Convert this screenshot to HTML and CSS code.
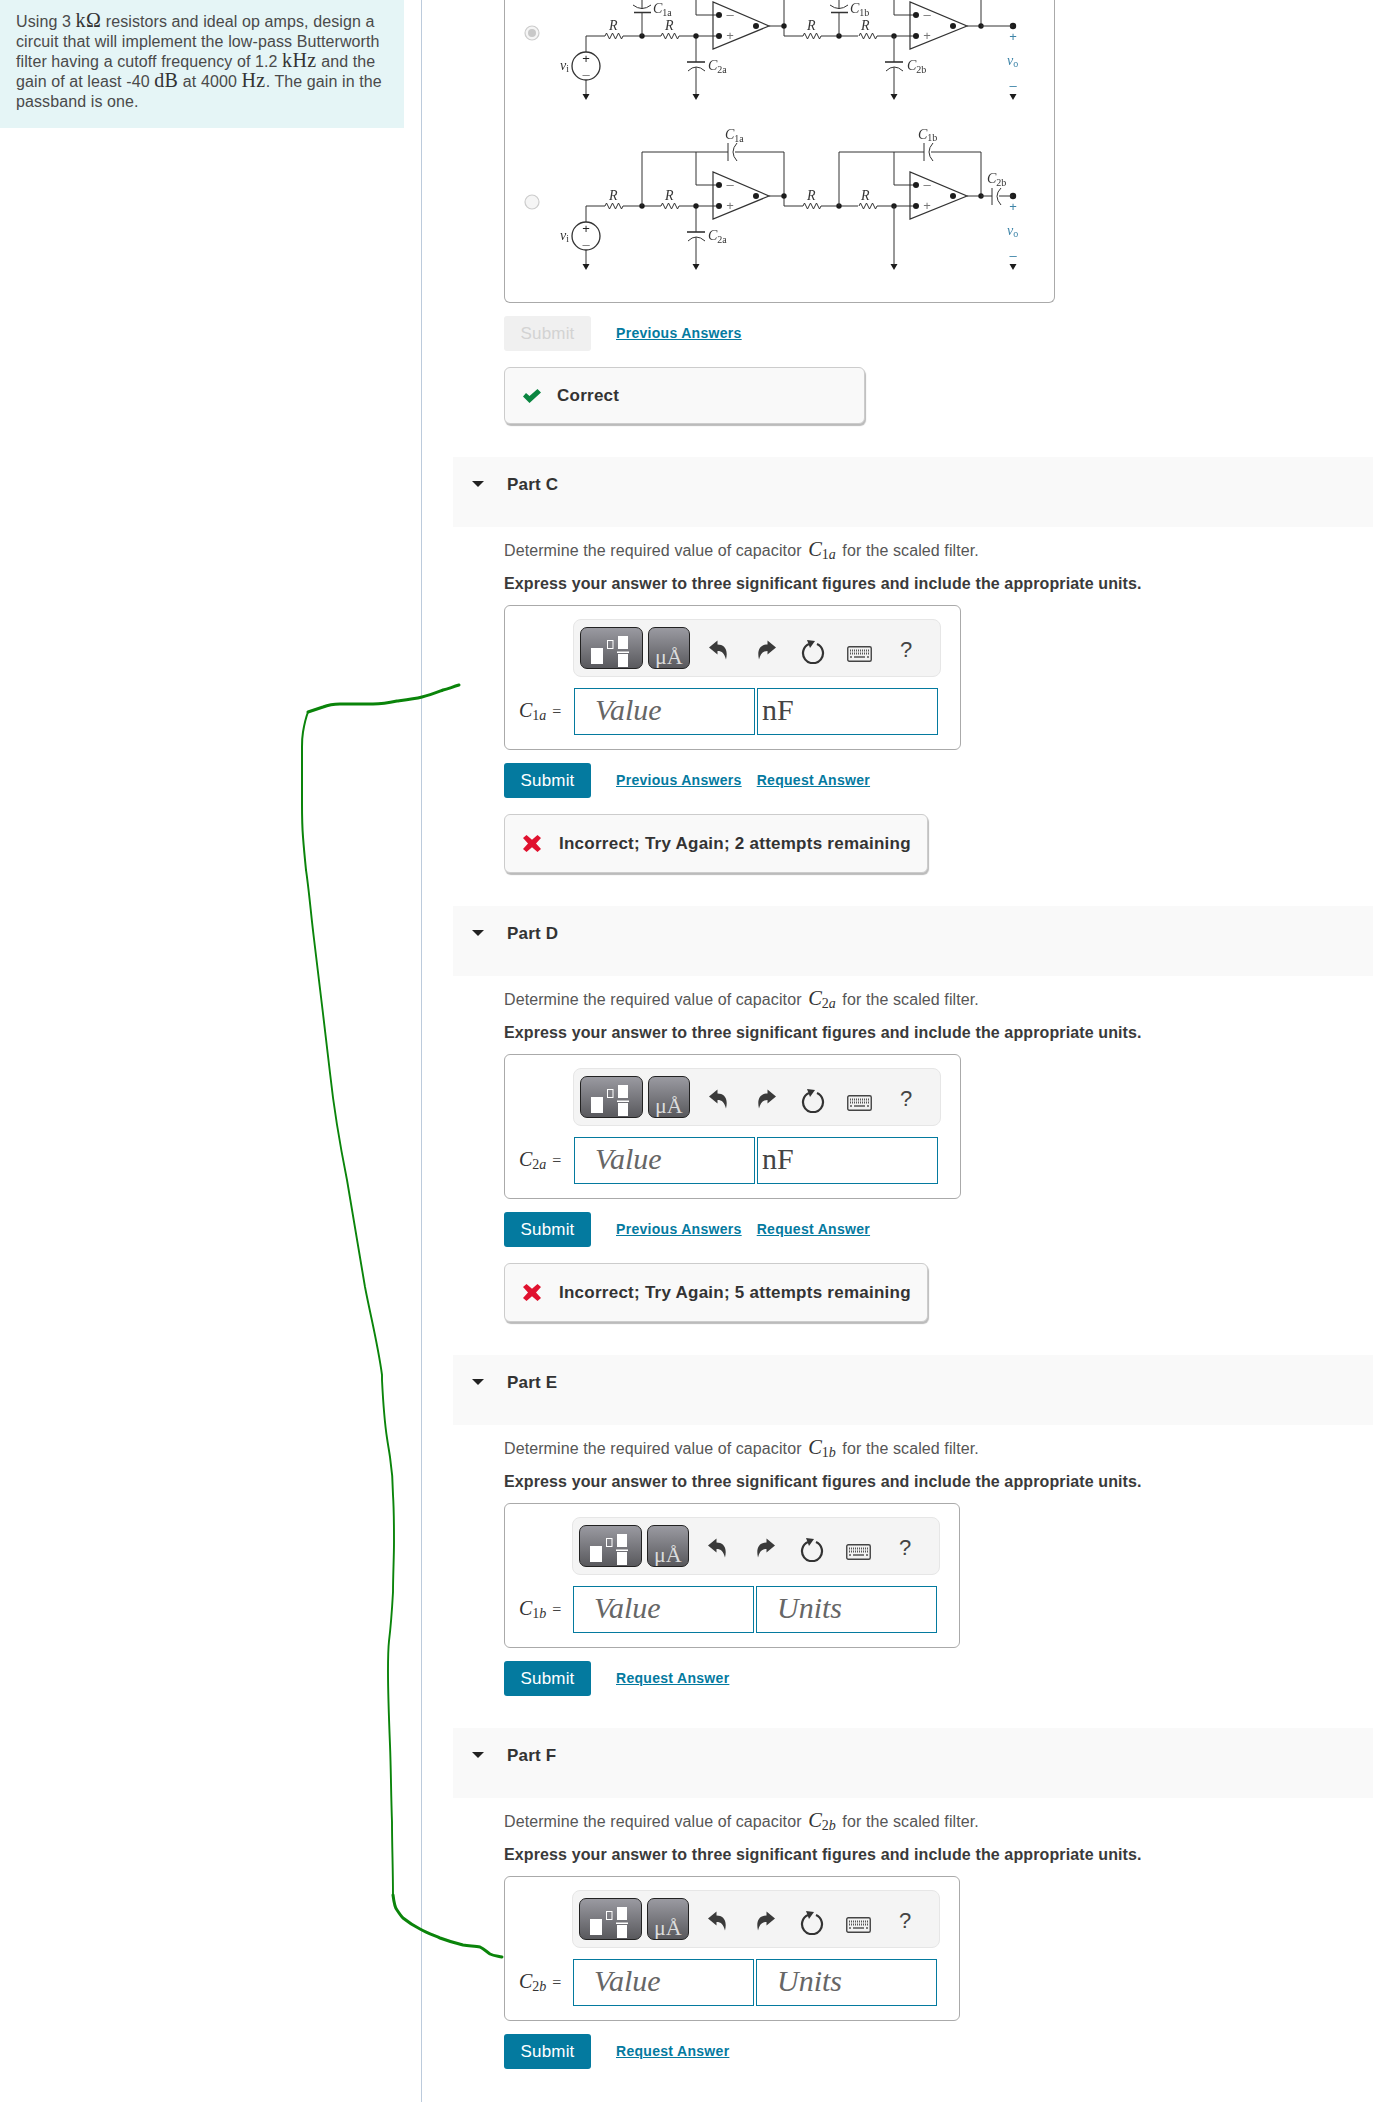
FILE: index.html
```html
<!DOCTYPE html>
<html>
  <head>
    <meta charset="utf-8" />
    <title>Part C - Part F</title>
    <link rel="stylesheet" href="styles.css">
  </head>
  <body>
    <svg class="defs" width="0" height="0">
      <symbol id="i-undo" viewBox="0 0 18 20">
        <path d="M0 7.500 L8.500 0.500 V4.500 C15 4.500 19.500 9 17 19.500 C15.500 13.500 13 11 8.500 11 V14.500 Z" />
      </symbol>
      <symbol id="i-reset" viewBox="0 0 24 26">
        <path class="ring" d="M16 6 A10 10 0 1 1 8 6" />
        <path d="M6 2 L14 3 L9 10 Z" />
      </symbol>
      <symbol id="i-keys" viewBox="0 0 25 16">
        <rect class="kb" x="0.75" y="0.75" width="23.5" height="14.5" rx="1.5" />
        <path class="kb-keys" d="M3 4.5 H22 M3 7.5 H22" />
        <path class="kb-bar" d="M3 11 H5 M7 11 H18 M20 11 H22" />
      </symbol>
      <symbol id="i-template" viewBox="0 0 63 42">
        <rect x="11" y="21" width="12" height="16" />
        <rect class="hollow" x="27.5" y="13.5" width="5.5" height="8" />
        <rect x="38" y="9" width="10" height="13" />
        <rect x="37" y="24.500" width="12" height="1.5" />
        <rect x="38" y="27" width="10" height="13" />
      </symbol>
      <symbol id="i-check" viewBox="0 0 18 14">
        <path d="M0 7.500 L3 4 L6.500 7 L14.500 0 L18 3.500 L6.500 14 Z" />
      </symbol>
      <symbol id="i-cross" viewBox="0 0 18 17">
        <path d="M0 3 L3.500 0 L9 4.800 L14.500 0 L18 3 L13 8.500 L18 14 L14.500 17 L9 12.200 L3.500 17 L0 14 L5 8.500 Z" />
      </symbol>
    </svg>

    <div class="page">
      <aside class="sidebar">
        <div class="problem">
          Using 3 <span class="math">kΩ</span> resistors and ideal op amps, design a circuit that will implement the low-pass Butterworth
          filter having a cutoff frequency of 1.2 <span class="math">kHz</span> and the gain of at least -40 <span class="math">dB</span> at 4000 <span class="math">Hz</span>. The gain in the
          passband is one.
        </div>
      </aside>

      <main class="main">
        <div class="first-part">
          <div class="choices">
            <svg class="circuit" viewBox="505 0 549 302" width="549" height="302">
              <defs>
                <g id="common">
                  <path d="M586 222V206H605M623 206H661M679 206H719M784 152V206H803M821 206H858M877 206H916M586 250V265M696 206V232M696 237V265M696 152V185H719M894 152V185H916M769 196H784M967 196H981M981 152V196" />
                  <path d="M605 206l1.500-3 3 6 3-6 3 6 3-6 3 6 1.500-3" />
                  <path d="M661 206l1.500-3 3 6 3-6 3 6 3-6 3 6 1.500-3" />
                  <path d="M803 206l1.500-3 3 6 3-6 3 6 3-6 3 6 1.500-3" />
                  <path d="M859 206l1.500-3 3 6 3-6 3 6 3-6 3 6 1.500-3" />
                  <circle class="source" cx="586" cy="236" r="14" />
                  <path class="amp" d="M713 172V219L769 196Z" />
                  <path class="amp" d="M910 172V219L967 196Z" />
                  <path class="plate" d="M687 232H705" />
                  <path d="M688 241Q696 233 705 241" />
                  <path class="fill" d="M582.500 264H589.500L586 270ZM692.500 264H699.500L696 270ZM890.500 264H897.500L894 270ZM1009.500 264H1016.500L1013 270Z" />
                  <g class="fill">
                    <circle cx="642" cy="206" r="2.700" />
                    <circle cx="696" cy="206" r="2.700" />
                    <circle cx="784" cy="196" r="2.700" />
                    <circle cx="839" cy="206" r="2.700" />
                    <circle cx="894" cy="206" r="2.700" />
                    <circle cx="981" cy="196" r="2.700" />
                    <circle cx="1013" cy="196" r="3.200" />
                    <circle cx="719" cy="185" r="3" />
                    <circle cx="719" cy="206" r="3" />
                    <circle cx="756" cy="196" r="3" />
                    <circle cx="916" cy="185" r="3" />
                    <circle cx="916" cy="206" r="3" />
                    <circle cx="953" cy="196" r="3" />
                  </g>
                  <text class="sym" x="609" y="200">R</text>
                  <text class="sym" x="665" y="200">R</text>
                  <text class="sym" x="807" y="200">R</text>
                  <text class="sym" x="861" y="200">R</text>
                  <text class="sym" x="560" y="240">v<tspan class="sub" dy="2">i</tspan></text>
                  <text class="sym" x="708" y="240">C<tspan class="sub" dy="3">2a</tspan></text>
                  <text class="sign" x="586" y="233">+</text>
                  <text class="sign light" x="586" y="249">–</text>
                  <text class="sign light" x="730" y="189">–</text>
                  <text class="sign light" x="730" y="210">+</text>
                  <text class="sign light" x="927" y="189">–</text>
                  <text class="sign light" x="927" y="210">+</text>
                  <text class="sign blue" x="1013" y="211">+</text>
                  <text class="sym blue" x="1007" y="235">v<tspan class="sub" dy="2">o</tspan></text>
                  <text class="sign blue" x="1013" y="260">–</text>
                </g>
              </defs>

              <!-- selected option, series caps to ground -->
              <circle class="radio" cx="532" cy="33" r="7" />
              <circle class="radio-dot" cx="532" cy="33" r="4" />
              <use href="#common" y="-170" />
              <g>
                <path d="M642 0V9M642 12V36M839 0V9M839 12V36M894 36V62M894 67V95M981 26H1013" />
                <path class="plate" d="M634 12.500H651M831 12.500H848" />
                <path d="M633 5Q642 12 651 5M830 5Q839 12 848 5M886 71Q894 63 903 71" />
                <path class="plate" d="M885 62H903" />
                <text class="sym" x="653" y="13">C<tspan class="sub" dy="3">1a</tspan></text>
                <text class="sym" x="850" y="13">C<tspan class="sub" dy="3">1b</tspan></text>
                <text class="sym" x="907" y="70">C<tspan class="sub" dy="3">2b</tspan></text>
              </g>

              <!-- second option, feedback caps -->
              <circle class="radio" cx="532" cy="202" r="7" />
              <use href="#common" />
              <g>
                <path d="M642 206V152H728M735 152H784M839 206V152H924M931 152H981M894 206V265M981 196H992M999 196H1013" />
                <path d="M728 143V161M924 143V161M992 188V205" />
                <path d="M737 143Q729 152 737 161M933 143Q925 152 933 161M1001 188Q993 196 1001 205" />
                <text class="sym" x="725" y="139">C<tspan class="sub" dy="3">1a</tspan></text>
                <text class="sym" x="918" y="139">C<tspan class="sub" dy="2">1b</tspan></text>
                <text class="sym" x="987" y="183">C<tspan class="sub" dy="3">2b</tspan></text>
              </g>
            </svg>
          </div>
          <div class="actions">
            <button class="submit" disabled>Submit</button>
            <a class="link" href="#">Previous Answers</a>
          </div>
          <div class="feedback correct">
            <svg class="fb-icon" width="18" height="14"><use href="#i-check" /></svg>
            <span>Correct</span>
          </div>
        </div>

        <section class="part">
          <div class="part-head"><span class="caret"></span>Part C</div>
          <div class="part-body">
            <p class="prompt">Determine the required value of capacitor <span class="var">C<sub>1<i>a</i></sub></span> for the scaled filter.</p>
            <p class="hint">Express your answer to three significant figures and include the appropriate units.</p>
            <div class="answer">
              <div class="toolbar">
                <span class="tool tool-wide"><svg width="63" height="42"><use href="#i-template" /></svg></span>
                <span class="tool tool-unit">μÅ</span>
                <svg class="t-undo"><use href="#i-undo" /></svg>
                <svg class="t-redo"><use href="#i-undo" /></svg>
                <svg class="t-reset"><use href="#i-reset" /></svg>
                <svg class="t-keys"><use href="#i-keys" /></svg>
                <span class="t-help">?</span>
              </div>
              <label class="answer-label"><span class="var">C<sub>1<i>a</i></sub></span> <span class="eq">=</span></label>
              <div class="fields">
                <div class="field placeholder">Value</div>
                <div class="field filled">nF</div>
              </div>
            </div>
            <div class="actions">
              <button class="submit">Submit</button>
              <a class="link" href="#">Previous Answers</a>
              <a class="link" href="#">Request Answer</a>
            </div>
            <div class="feedback wrong">
              <svg class="fb-icon" width="18" height="17"><use href="#i-cross" /></svg>
              <span>Incorrect; Try Again; 2 attempts remaining</span>
            </div>
          </div>
        </section>

        <section class="part">
          <div class="part-head"><span class="caret"></span>Part D</div>
          <div class="part-body">
            <p class="prompt">Determine the required value of capacitor <span class="var">C<sub>2<i>a</i></sub></span> for the scaled filter.</p>
            <p class="hint">Express your answer to three significant figures and include the appropriate units.</p>
            <div class="answer">
              <div class="toolbar">
                <span class="tool tool-wide"><svg width="63" height="42"><use href="#i-template" /></svg></span>
                <span class="tool tool-unit">μÅ</span>
                <svg class="t-undo"><use href="#i-undo" /></svg>
                <svg class="t-redo"><use href="#i-undo" /></svg>
                <svg class="t-reset"><use href="#i-reset" /></svg>
                <svg class="t-keys"><use href="#i-keys" /></svg>
                <span class="t-help">?</span>
              </div>
              <label class="answer-label"><span class="var">C<sub>2<i>a</i></sub></span> <span class="eq">=</span></label>
              <div class="fields">
                <div class="field placeholder">Value</div>
                <div class="field filled">nF</div>
              </div>
            </div>
            <div class="actions">
              <button class="submit">Submit</button>
              <a class="link" href="#">Previous Answers</a>
              <a class="link" href="#">Request Answer</a>
            </div>
            <div class="feedback wrong">
              <svg class="fb-icon" width="18" height="17"><use href="#i-cross" /></svg>
              <span>Incorrect; Try Again; 5 attempts remaining</span>
            </div>
          </div>
        </section>

        <section class="part">
          <div class="part-head"><span class="caret"></span>Part E</div>
          <div class="part-body">
            <p class="prompt">Determine the required value of capacitor <span class="var">C<sub>1<i>b</i></sub></span> for the scaled filter.</p>
            <p class="hint">Express your answer to three significant figures and include the appropriate units.</p>
            <div class="answer narrow">
              <div class="toolbar">
                <span class="tool tool-wide"><svg width="63" height="42"><use href="#i-template" /></svg></span>
                <span class="tool tool-unit">μÅ</span>
                <svg class="t-undo"><use href="#i-undo" /></svg>
                <svg class="t-redo"><use href="#i-undo" /></svg>
                <svg class="t-reset"><use href="#i-reset" /></svg>
                <svg class="t-keys"><use href="#i-keys" /></svg>
                <span class="t-help">?</span>
              </div>
              <label class="answer-label"><span class="var">C<sub>1<i>b</i></sub></span> <span class="eq">=</span></label>
              <div class="fields">
                <div class="field placeholder">Value</div>
                <div class="field placeholder">Units</div>
              </div>
            </div>
            <div class="actions">
              <button class="submit">Submit</button>
              <a class="link" href="#">Request Answer</a>
            </div>
          </div>
        </section>

        <section class="part">
          <div class="part-head"><span class="caret"></span>Part F</div>
          <div class="part-body">
            <p class="prompt">Determine the required value of capacitor <span class="var">C<sub>2<i>b</i></sub></span> for the scaled filter.</p>
            <p class="hint">Express your answer to three significant figures and include the appropriate units.</p>
            <div class="answer narrow">
              <div class="toolbar">
                <span class="tool tool-wide"><svg width="63" height="42"><use href="#i-template" /></svg></span>
                <span class="tool tool-unit">μÅ</span>
                <svg class="t-undo"><use href="#i-undo" /></svg>
                <svg class="t-redo"><use href="#i-undo" /></svg>
                <svg class="t-reset"><use href="#i-reset" /></svg>
                <svg class="t-keys"><use href="#i-keys" /></svg>
                <span class="t-help">?</span>
              </div>
              <label class="answer-label"><span class="var">C<sub>2<i>b</i></sub></span> <span class="eq">=</span></label>
              <div class="fields">
                <div class="field placeholder">Value</div>
                <div class="field placeholder">Units</div>
              </div>
            </div>
            <div class="actions">
              <button class="submit">Submit</button>
              <a class="link" href="#">Request Answer</a>
            </div>
          </div>
        </section>
      </main>

      <!-- hand drawn bracket over the page -->
      <svg class="scribble" width="1384" height="2102" viewBox="0 0 1384 2102">
        <path class="ink-thick" d="M459 685 C452 687 448 689 443 690 C435 693 430 695 422 697 C414 699 405 700 397 701 C388 703 380 704 373 704 C362 704 350 704 340 704 C333 704 328 705 323 707 L308 712" />
        <path class="ink-mid" d="M308 712 C305 720 304 726 303 732 C302 738 302 742 302 747 C302 770 302 790 302 803 C302 815 302 825 303 837 C304 850 305 860 306 870" />
        <path class="ink-thin" d="M306 870 C309 890 311 915 314 939 C319 980 325 1030 330 1073 C334 1110 340 1145 347 1180 C353 1215 359 1250 365 1287 C371 1318 378 1345 382 1375 L382 1380 C383 1400 385 1425 387 1438 C388 1445 389 1450 390 1457 C392 1470 393 1482 393 1495 C394 1510 394 1525 394 1541 C394 1558 393 1575 393 1592 C392 1610 391 1625 389 1641 C388 1650 388 1660 388 1672 C388 1695 389 1720 390 1745 C391 1770 391 1795 392 1822 C392 1845 393 1870 393 1895" />
        <path class="ink-thick" d="M393 1895 C394 1903 395 1908 397 1910 C399 1913 401 1916 403 1918 C408 1922 414 1926 420 1929 C427 1933 433 1935 440 1938 C448 1941 455 1943 463 1945 C470 1946 476 1946 480 1947 C484 1949 487 1952 490 1954 C494 1956 498 1956 502 1957" />
      </svg>
    </div>
  </body>
</html>
```

FILE: styles.css
```css
html,
body {
  margin: 0;
  background-color: white;
}
body {
  font-family: "Liberation Sans", Arial, sans-serif;
  font-size: 16px;
  color: #444;
}
.defs {
  position: absolute;
}
.page {
  position: relative;
  display: flex;
  height: 2102px;
  overflow: hidden;
}
.sidebar {
  width: 421px;
  flex: none;
  border-right: 1px solid #bccbdc;
}
.problem {
  width: 404px;
  height: 128px;
  box-sizing: border-box;
  padding: 12px 16px 0;
  background-color: #e5f5f6;
  line-height: 20px;
  letter-spacing: 0.1px;
  color: #4a4a4a;
}
.math {
  font-family: "Liberation Serif", serif;
  font-size: 20px;
  line-height: 16px;
  letter-spacing: 0.4px;
  color: #333;
}
.main {
  flex: 1;
  padding: 0 11px 0 31px;
}
.first-part {
  padding-left: 51px;
  margin-bottom: 33px;
}
.choices {
  width: 549px;
  height: 302px;
  border: 1px solid #aaa;
  border-top: none;
  border-radius: 0 0 6px 6px;
  margin-bottom: 13px;
}
.circuit {
  display: block;
  filter: blur(0.35px);
}
.circuit path,
.circuit circle {
  fill: none;
  stroke: #333;
  stroke-width: 1;
}
.circuit .source {
  stroke-width: 1.3;
  fill: white;
}
.circuit .amp {
  stroke-width: 1.2;
}
.circuit .plate {
  stroke-width: 1.6;
}
.circuit .fill,
.circuit .fill circle,
.circuit .fill path {
  fill: #1c1c1c;
  stroke: none;
}
.circuit .radio {
  fill: #f5f5f5;
  stroke: #ccc;
  stroke-width: 1.2;
}
.circuit .radio-dot {
  fill: #c8c8c8;
  stroke: none;
}
.sym {
  font-family: "Liberation Serif", serif;
  font-style: italic;
  font-size: 14px;
  fill: #333;
}
.sub {
  font-style: normal;
  font-size: 10px;
}
.sign {
  font-family: "Liberation Sans", sans-serif;
  font-size: 13px;
  text-anchor: middle;
  fill: #222;
}
.sign.light {
  fill: #777;
}
.blue,
.sign.blue {
  fill: #3d84a8;
}
.actions {
  display: flex;
  align-items: center;
  height: 35px;
}
.submit {
  width: 87px;
  height: 35px;
  padding: 0;
  margin-right: 25px;
  border: none;
  border-radius: 3px;
  background-color: #047a9f;
  color: white;
  font-family: "Liberation Sans", Arial, sans-serif;
  font-size: 17px;
  letter-spacing: 0.2px;
}
.submit:disabled {
  background-color: #f0f0f0;
  color: #d3d3d3;
}
.link {
  margin-right: 15px;
  margin-bottom: 2px;
  color: #047a9f;
  font-size: 14px;
  font-weight: bold;
  letter-spacing: 0.3px;
}
.feedback {
  display: flex;
  align-items: center;
  width: fit-content;
  height: 55px;
  margin-top: 16px;
  padding: 0 16px 0 18px;
  background-color: #f9f9f9;
  border: 1px solid #ccc;
  border-radius: 6px;
  box-shadow: 1px 2px 1px #bbb;
  font-size: 17px;
  font-weight: bold;
  letter-spacing: 0.25px;
  color: #333;
}
.correct {
  width: 325px;
}
.correct .fb-icon {
  margin-right: 16px;
  fill: #0a8540;
}
.wrong {
  height: 57px;
  margin-top: 16px;
  margin-bottom: 33px;
}
.wrong .fb-icon {
  margin-right: 18px;
  fill: #e0122f;
}
.part {
  margin-bottom: 32px;
}
.part:has(.wrong) {
  margin-bottom: 0;
}
.part-head {
  position: relative;
  height: 52px;
  padding: 18px 0 0 54px;
  background-color: #f9f9f9;
  font-size: 17px;
  font-weight: bold;
  letter-spacing: 0.2px;
  line-height: 20px;
  color: #333;
}
.caret {
  position: absolute;
  left: 19px;
  top: 24px;
  border-style: solid;
  border-width: 6px 6.500px 0;
  border-color: #222 transparent transparent;
}
.part-body {
  padding-left: 51px;
}
.prompt,
.hint {
  margin: 0;
  line-height: 20px;
}
.prompt {
  margin-top: 14px;
  letter-spacing: 0.1px;
  color: #565656;
}
.hint {
  margin-top: 13px;
  font-weight: bold;
  letter-spacing: 0.12px;
  color: #3a3a3a;
}
.var {
  margin: 0 2px;
  font-family: "Liberation Serif", serif;
  font-style: italic;
  font-size: 20.500px;
  line-height: 16px;
  letter-spacing: 0;
  color: #333;
}
.var sub {
  font-style: normal;
  font-size: 14px;
  line-height: 10px;
  vertical-align: -3px;
}
.answer {
  display: inline-grid;
  grid-template-columns: 44px auto;
  column-gap: 11px;
  row-gap: 11px;
  margin-top: 11px;
  margin-bottom: 13px;
  padding: 13px 19px 14px 14px;
  border: 1px solid #aaa;
  border-radius: 6px;
  vertical-align: top;
}
.answer.narrow {
  grid-template-columns: 43px auto;
}
.toolbar {
  grid-column: 2;
  display: flex;
  align-items: center;
  box-sizing: border-box;
  width: 368px;
  height: 58px;
  margin-left: -1px;
  padding-left: 6px;
  background-color: #f4f4f4;
  border: 1px solid #e6e6e6;
  border-radius: 8px;
}
.tool {
  display: block;
  box-sizing: border-box;
  height: 42px;
  border: 1px solid #222;
  border-radius: 7px;
  background: linear-gradient(#9a9aa1, #59595d);
  overflow: hidden;
  fill: white;
}
.tool svg {
  display: block;
  margin: -1px;
}
.hollow {
  fill: none;
  stroke: white;
  stroke-width: 1;
}
.tool-wide {
  width: 63px;
  margin-right: 5px;
}
.tool-unit {
  width: 42px;
  margin-right: 19px;
  padding: 16px 0 0 6px;
  font-family: "Liberation Serif", serif;
  font-size: 22px;
  line-height: 26px;
  color: #dcdcdc;
}
.t-undo,
.t-redo {
  width: 18px;
  height: 20px;
  margin-top: 3px;
  margin-right: 31px;
  fill: #3a3a3a;
}
.t-redo {
  transform: scaleX(-1);
  margin-right: 25px;
}
.t-reset {
  width: 24px;
  height: 26px;
  margin-top: 5px;
  margin-right: 22px;
  fill: #333;
}
.ring {
  fill: none;
  stroke: #333;
  stroke-width: 2.200;
}
.t-keys {
  width: 25px;
  height: 16px;
  margin-top: 11px;
  margin-right: 28px;
}
.kb {
  fill: #f2f2f2;
  stroke: #444;
  stroke-width: 1.400;
}
.kb-keys {
  fill: none;
  stroke: #555;
  stroke-width: 2;
  stroke-dasharray: 1 1;
}
.kb-bar {
  fill: none;
  stroke: #555;
  stroke-width: 1.500;
}
.t-help {
  margin-top: 3px;
  font-size: 22px;
  color: #444;
}
.answer-label {
  grid-column: 1;
  align-self: center;
  white-space: nowrap;
  font-family: "Liberation Serif", serif;
  font-size: 16px;
  color: #444;
}
.answer-label .var {
  margin: 0;
  font-size: 20px;
}
.answer-label .eq {
  margin-left: 2px;
}
.fields {
  display: flex;
  gap: 2px;
}
.field {
  box-sizing: border-box;
  width: 181px;
  height: 47px;
  border: 1px solid #047a9f;
  font-family: "Liberation Serif", serif;
  font-size: 30px;
  line-height: 42px;
}
.placeholder {
  padding-left: 20px;
  font-style: italic;
  color: #666;
}
.filled {
  padding-left: 4px;
  color: #444;
}
.field.placeholder + .field.placeholder {
  padding-left: 20px;
}
.scribble {
  position: absolute;
  top: 0;
  left: 0;
  pointer-events: none;
}
.scribble path {
  fill: none;
  stroke: #0a840a;
  stroke-linecap: round;
  stroke-linejoin: round;
}
.ink-thick {
  stroke-width: 3;
}
.ink-mid {
  stroke-width: 2;
}
.ink-thin {
  stroke-width: 1.900;
}
```
